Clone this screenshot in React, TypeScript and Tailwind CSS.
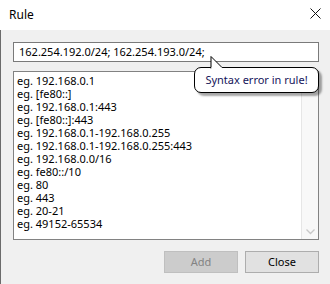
// App.tsx
const samples = [
  "eg. 192.168.0.1",
  "eg. [fe80::]",
  "eg. 192.168.0.1:443",
  "eg. [fe80::]:443",
  "eg. 192.168.0.1-192.168.0.255",
  "eg. 192.168.0.1-192.168.0.255:443",
  "eg. 192.168.0.0/16",
  "eg. fe80::/10",
  "eg. 80",
  "eg. 443",
  "eg. 20-21",
  "eg. 49152-65534",
];

const font = { fontFamily: '"Noto Sans", "Open Sans", sans-serif' };

const App = () => {
  return (
    <div
      className="w-[330px] h-[284px] flex flex-col bg-white text-black overflow-hidden relative"
      style={font}
    >
      {/* title bar */}
      <div className="h-[30px] flex items-center justify-between bg-white">
        <span className="pl-[9px] text-[12px]">Rule</span>
        <svg width="11" height="11" viewBox="0 0 11 11" className="mr-[9px] mb-[3px]">
          <path d="M0.5 0.5 L10.5 10.5 M10.5 0.5 L0.5 10.5" stroke="#111" strokeWidth="1" fill="none" />
        </svg>
      </div>

      {/* body */}
      <div className="flex-1 flex flex-col bg-[#f0f0f0] border-l border-[#6b6b6b] pl-[12px] pr-[11px] pt-[12px]">
        <div className="h-[20px] bg-white border border-[#7a7a7a] flex items-center pl-[5px] text-[11px]">
          162.254.192.0/24; 162.254.193.0/24;
        </div>

        <div className="mt-[9px] h-[169px] bg-white border border-[#828282] flex">
          <div className="flex-1 pl-[3px] pt-[2px] text-[11px] leading-[13px]">
            {samples.map((s) => (
              <div key={s} className="h-[13px]">{s}</div>
            ))}
          </div>
          <div className="w-[17px] bg-[#f8f8f8] border-l border-[#e6e6e6] flex flex-col justify-end items-center pb-[4px]">
            <svg width="9" height="6" viewBox="0 0 9 6">
              <path d="M0.5 0.5 L4.5 4.5 L8.5 0.5" stroke="#c8c8c8" strokeWidth="1.3" fill="none" />
            </svg>
          </div>
        </div>

        <div className="mt-[11px] flex justify-end gap-[7px] text-[11px]">
          <button className="w-[74px] h-[22px] bg-[#cccccc] border border-[#bfbfbf] text-[#838383]">
            Add
          </button>
          <button className="w-[74px] h-[22px] bg-[#e1e1e1] border border-[#adadad] text-black">
            Close
          </button>
        </div>
      </div>

      {/* balloon tooltip */}
      <div className="absolute left-[194px] top-[67px] w-[125px] h-[26px] bg-white border border-black rounded-[7px] shadow-[3px_3px_2px_rgba(0,0,0,0.35)] flex items-end justify-center pb-[4px] text-[11px] text-[#14145a]">
        Syntax error in rule!
      </div>
      <svg className="absolute left-[205px] top-[56px]" width="20" height="13" viewBox="0 0 20 13">
        <path d="M6 12.5 L6 0.5 L17.5 12" fill="white" stroke="black" strokeWidth="1" />
        <rect x="6.5" y="11" width="10" height="2" fill="white" />
      </svg>
    </div>
  );
};

export default App;
